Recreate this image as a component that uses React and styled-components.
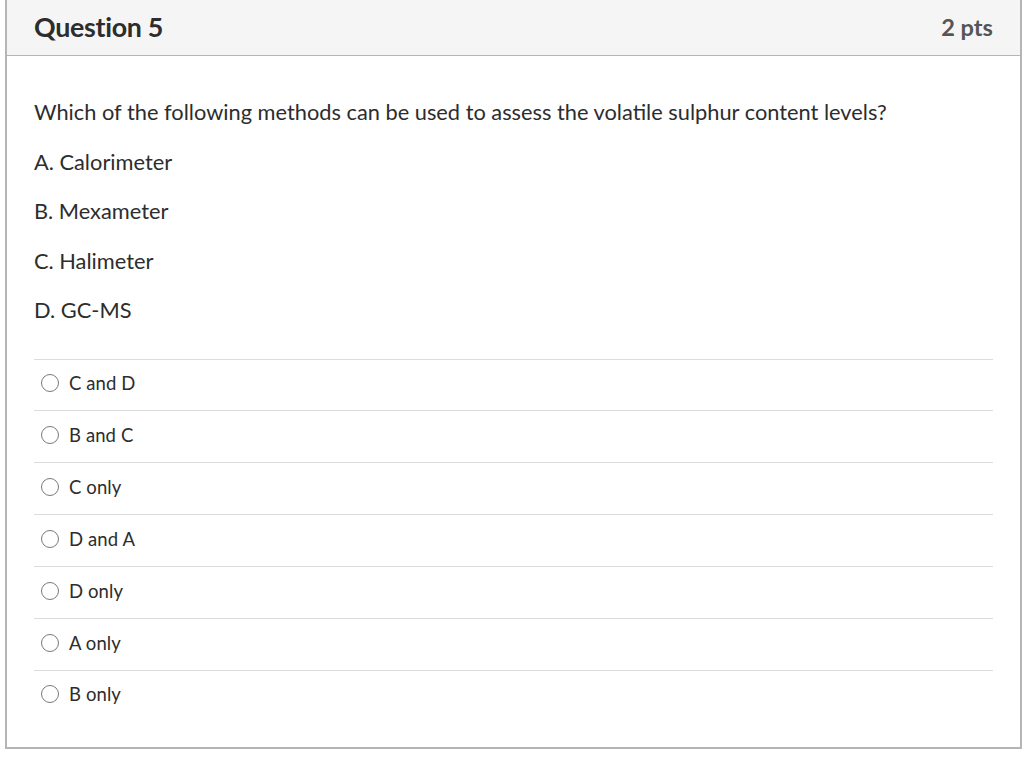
import React from "react";
import styled, { createGlobalStyle } from "styled-components";

const Global = createGlobalStyle`
  html, body { margin: 0; padding: 0; background: #fff; }
  body { font-family: Lato, "Open Sans", sans-serif; color: #2d2d2d; }
`;

const Card = styled.div`
  margin: -1px 0 0 5px;
  width: 1017px;
  box-sizing: border-box;
  border: 1px solid #b5b5b5;
  border-width: 1px 2px 2px 2px;
  background: #fff;
`;

const Header = styled.div`
  height: 56px;
  box-sizing: border-box;
  background: #f5f5f5;
  border-bottom: 1px solid #b5b5b5;
  display: flex;
  align-items: center;
  justify-content: space-between;
  padding: 0 27px 1px 27px;
`;

const Title = styled.h2`
  margin: 0;
  font-size: 26.8px;
  font-weight: 700;
  color: #2d2d2d;
  letter-spacing: -0.3px;
`;

const Points = styled.div`
  font-size: 23.6px;
  font-weight: 700;
  color: #555;
`;

const Body = styled.div`
  padding: 41px 27px 26px 27px;
`;

const Para = styled.p`
  margin: 0 0 19.5px 0;
  font-size: 21.8px;
  line-height: 30px;
  color: #2d2d2d;
`;

const Answers = styled.div`
  margin-top: 33.5px;
  display: flex;
  flex-direction: column;
`;

const Row = styled.label`
  display: flex;
  align-items: center;
  height: 51.85px;
  box-sizing: border-box;
  border-top: 1px solid #dcdcdc;
  gap: 10px;
  padding-left: 7px;
  padding-bottom: 3px;
  font-size: 18.5px;
  letter-spacing: 0.1px;
  color: #2d2d2d;
`;

const Radio = styled.span`
  width: 18px;
  height: 18px;
  border: 1.2px solid #7a7a7a;
  border-radius: 50%;
  box-sizing: border-box;
  flex: none;
`;

const questions = [
  "Which of the following methods can be used to assess the volatile sulphur content levels?",
  "A. Calorimeter",
  "B. Mexameter",
  "C. Halimeter",
  "D. GC-MS",
];

const answers = ["C and D", "B and C", "C only", "D and A", "D only", "A only", "B only"];

export default function App() {
  return (
    <>
      <Global />
      <Card>
        <Header>
          <Title>Question 5</Title>
          <Points>2 pts</Points>
        </Header>
        <Body>
          {questions.map((q) => (
            <Para key={q}>{q}</Para>
          ))}
          <Answers>
            {answers.map((a) => (
              <Row key={a}>
                <Radio />
                {a}
              </Row>
            ))}
          </Answers>
        </Body>
      </Card>
    </>
  );
}
